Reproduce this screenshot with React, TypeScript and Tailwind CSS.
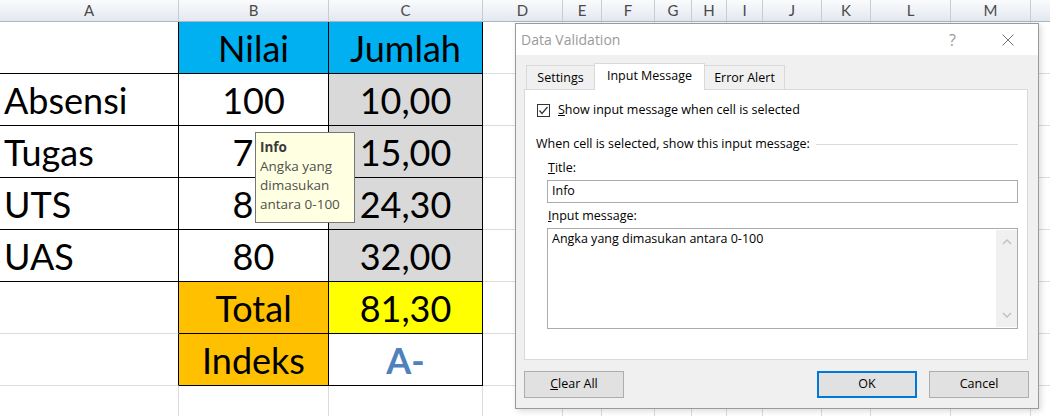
import React from "react";

const colW = [
    "w-[179px]",
    "w-[150px]",
    "w-[154px]",
    "w-[80px]",
    "w-[39px]",
    "w-[53px]",
    "w-[37px]",
    "w-[35px]",
    "w-[36px]",
    "w-[59px]",
    "w-[49px]",
    "w-[80px]",
    "w-[80px]",
    "w-[80px]",
];
const letters = ["A", "B", "C", "D", "E", "F", "G", "H", "I", "J", "K", "L", "M", ""];

const BK = "border-r-black border-b-black";
const GR = "border-r-[#dadcdd] border-b-[#dadcdd]";
const AL = "border-r-black border-b-[#dadcdd]";
const MID = "justify-center";

type CellDef = { text?: string; cls: string };

const rows: CellDef[][] = [
    [
        { cls: BK },
        { text: "Nilai", cls: `${BK} ${MID} bg-[#00b0f0] text-black` },
        { text: "Jumlah", cls: `${BK} ${MID} bg-[#00b0f0] text-black` },
    ],
    [
        { text: "Absensi", cls: `${BK} pl-[4px] text-black` },
        { text: "100", cls: `${BK} ${MID} text-black` },
        { text: "10,00", cls: `${BK} ${MID} bg-[#d9d9d9] text-black` },
    ],
    [
        { text: "Tugas", cls: `${BK} pl-[4px] text-black` },
        { text: "75", cls: `${BK} ${MID} text-black` },
        { text: "15,00", cls: `${BK} ${MID} bg-[#d9d9d9] text-black` },
    ],
    [
        { text: "UTS", cls: `${BK} pl-[4px] text-black` },
        { text: "81", cls: `${BK} ${MID} text-black` },
        { text: "24,30", cls: `${BK} ${MID} bg-[#d9d9d9] text-black` },
    ],
    [
        { text: "UAS", cls: `${BK} pl-[4px] text-black` },
        { text: "80", cls: `${BK} ${MID} text-black` },
        { text: "32,00", cls: `${BK} ${MID} bg-[#d9d9d9] text-black` },
    ],
    [
        { cls: AL },
        { text: "Total", cls: `${BK} ${MID} bg-[#ffc000] text-black` },
        { text: "81,30", cls: `${BK} ${MID} bg-[#ffff00] text-black` },
    ],
    [
        { cls: AL },
        { text: "Indeks", cls: `${BK} ${MID} bg-[#ffc000] text-black` },
        { text: "A-", cls: `${BK} ${MID} font-bold text-[#4f81bd]` },
    ],
    [{ cls: GR }, { cls: GR }, { cls: GR }],
];

const Sheet = () => (
    <div className="flex flex-col font-['Lato',sans-serif]">
        <div className="flex h-[22px] shrink-0">
            {letters.map((l, i) => (
                <div
                    key={i}
                    className={`${colW[i]} shrink-0 h-full flex items-center justify-center border-r border-b border-r-[#c6cdd7] border-b-[#a9b6c6] bg-linear-to-b from-[#fafbfd] to-[#e3e8ef] text-[15px] text-[#4a4a4a]`}
                >
                    {l}
                </div>
            ))}
        </div>
        {rows.map((r, ri) => (
            <div key={ri} className="flex h-[52px] shrink-0">
                {colW.map((w, ci) => {
                    const c = r[ci] ?? { cls: GR };
                    return (
                        <div
                            key={ci}
                            className={`${w} shrink-0 h-full flex items-end pb-[3px] border-r border-b text-[36px] leading-[1.2] ${c.cls}`}
                        >
                            {c.text}
                        </div>
                    );
                })}
            </div>
        ))}
    </div>
);

const Tooltip = () => (
    <div className="absolute left-[255px] top-[132px] w-[100px] h-[91px] bg-[#ffffe1] border border-[#767676] pl-[4px] pt-[5px] font-['Open_Sans',sans-serif] text-[13.5px] leading-[19px] text-[#505050]">
        <div className="font-bold text-[#3a3a3a]">Info</div>
        <div>Angka yang</div>
        <div>dimasukan</div>
        <div>antara 0-100</div>
    </div>
);

const Chevron = ({ up }: { up?: boolean }) => (
    <svg width="10" height="6" viewBox="0 0 10 6">
        <polyline
            points={up ? "1,5 5,1 9,5" : "1,1 5,5 9,1"}
            fill="none"
            stroke="#c2c2c2"
            strokeWidth="1.5"
        />
    </svg>
);

const Button = ({ children, primary }: { children: React.ReactNode; primary?: boolean }) => (
    <div
        className={`w-[100px] h-[27px] flex items-center justify-center bg-[#e1e1e1] ${
            primary ? "border-2 border-[#0078d7]" : "border border-[#adadad]"
        }`}
    >
        {children}
    </div>
);

const Dialog = () => (
    <div className="absolute left-[515px] top-[23px] w-[524px] h-[386px] border border-[#9a9a9a] bg-[#f0f0f0] shadow-[2px_2px_6px_rgba(0,0,0,0.15)] flex flex-col font-['Open_Sans',sans-serif] text-[12.5px] text-black">
        <div className="h-[31px] bg-white flex items-center pl-[5px] pr-[24px]">
            <span className="text-[14px] text-[#9a9a9a]">Data Validation</span>
            <span className="ml-auto text-[16px] text-[#9a9a9a]">?</span>
            <svg className="ml-[46px]" width="12" height="12" viewBox="0 0 12 12">
                <path d="M0.5 0.5 L11.5 11.5 M11.5 0.5 L0.5 11.5" stroke="#777" strokeWidth="1" />
            </svg>
        </div>
        <div className="flex flex-col pl-[8px] pt-[8px]">
            <div className="flex items-end h-[26px] pl-[2px]">
                <div className="w-[68px] h-[24px] border-t border-l border-[#d9d9d9] flex items-center justify-center pt-[1px]">
                    Settings
                </div>
                <div className="w-[111px] h-[27px] -mb-px border-t border-l border-r border-[#d9d9d9] bg-white z-10 flex items-center justify-center pb-[1px]">
                    Input Message
                </div>
                <div className="w-[80px] h-[24px] border-t border-r border-[#d9d9d9] flex items-center justify-center pt-[1px]">
                    Error Alert
                </div>
            </div>
            <div className="w-[504px] h-[271px] border border-[#d9d9d9] bg-white flex flex-col pl-[11px] pr-[9px] pt-[12px]">
                <div className="h-[17px] flex items-center pl-[1px]">
                    <div className="w-[13px] h-[13px] border border-[#333] flex items-center justify-center">
                        <svg width="11" height="11" viewBox="0 0 11 11">
                            <polyline points="1.5,5.5 4,8.5 9.5,2" fill="none" stroke="#333" strokeWidth="1.2" />
                        </svg>
                    </div>
                    <span className="ml-[8px]">
                        <u>S</u>how input message when cell is selected
                    </span>
                </div>
                <div className="h-[18px] mt-[16px] flex items-center">
                    <span>When cell is selected, show this input message:</span>
                    <div className="flex-1 h-px bg-[#dcdcdc] ml-[6px]" />
                </div>
                <div className="pl-[11px] flex flex-col">
                    <div className="h-[18px] mt-[6px] flex items-center pl-[1px]">
                        <span>
                            <u>T</u>itle:
                        </span>
                    </div>
                    <div className="h-[23px] mt-[3px] border border-[#ababab] flex items-center pl-[4px]">
                        Info
                    </div>
                    <div className="h-[18px] mt-[4px] flex items-center pl-[1px]">
                        <span>
                            <u>I</u>nput message:
                        </span>
                    </div>
                    <div className="h-[101px] mt-[3px] border border-[#ababab] flex">
                        <div className="flex-1 pl-[4px] pt-[1px] leading-[18px]">
                            Angka yang dimasukan antara 0-100
                        </div>
                        <div className="w-[21px] my-[1px] bg-[#f0f0f0] flex flex-col items-center justify-between py-[9px]">
                            <Chevron up />
                            <Chevron />
                        </div>
                    </div>
                </div>
            </div>
            <div className="flex mt-[11px] pr-[9px]">
                <Button>
                    <span>
                        <u>C</u>lear All
                    </span>
                </Button>
                <div className="flex-1" />
                <Button primary>OK</Button>
                <div className="w-[12px]" />
                <Button>Cancel</Button>
            </div>
        </div>
    </div>
);

const App = () => {
    return (
        <div className="relative w-[1050px] h-[416px] overflow-hidden bg-white">
            <Sheet />
            <Tooltip />
            <Dialog />
        </div>
    );
};

export default App;
